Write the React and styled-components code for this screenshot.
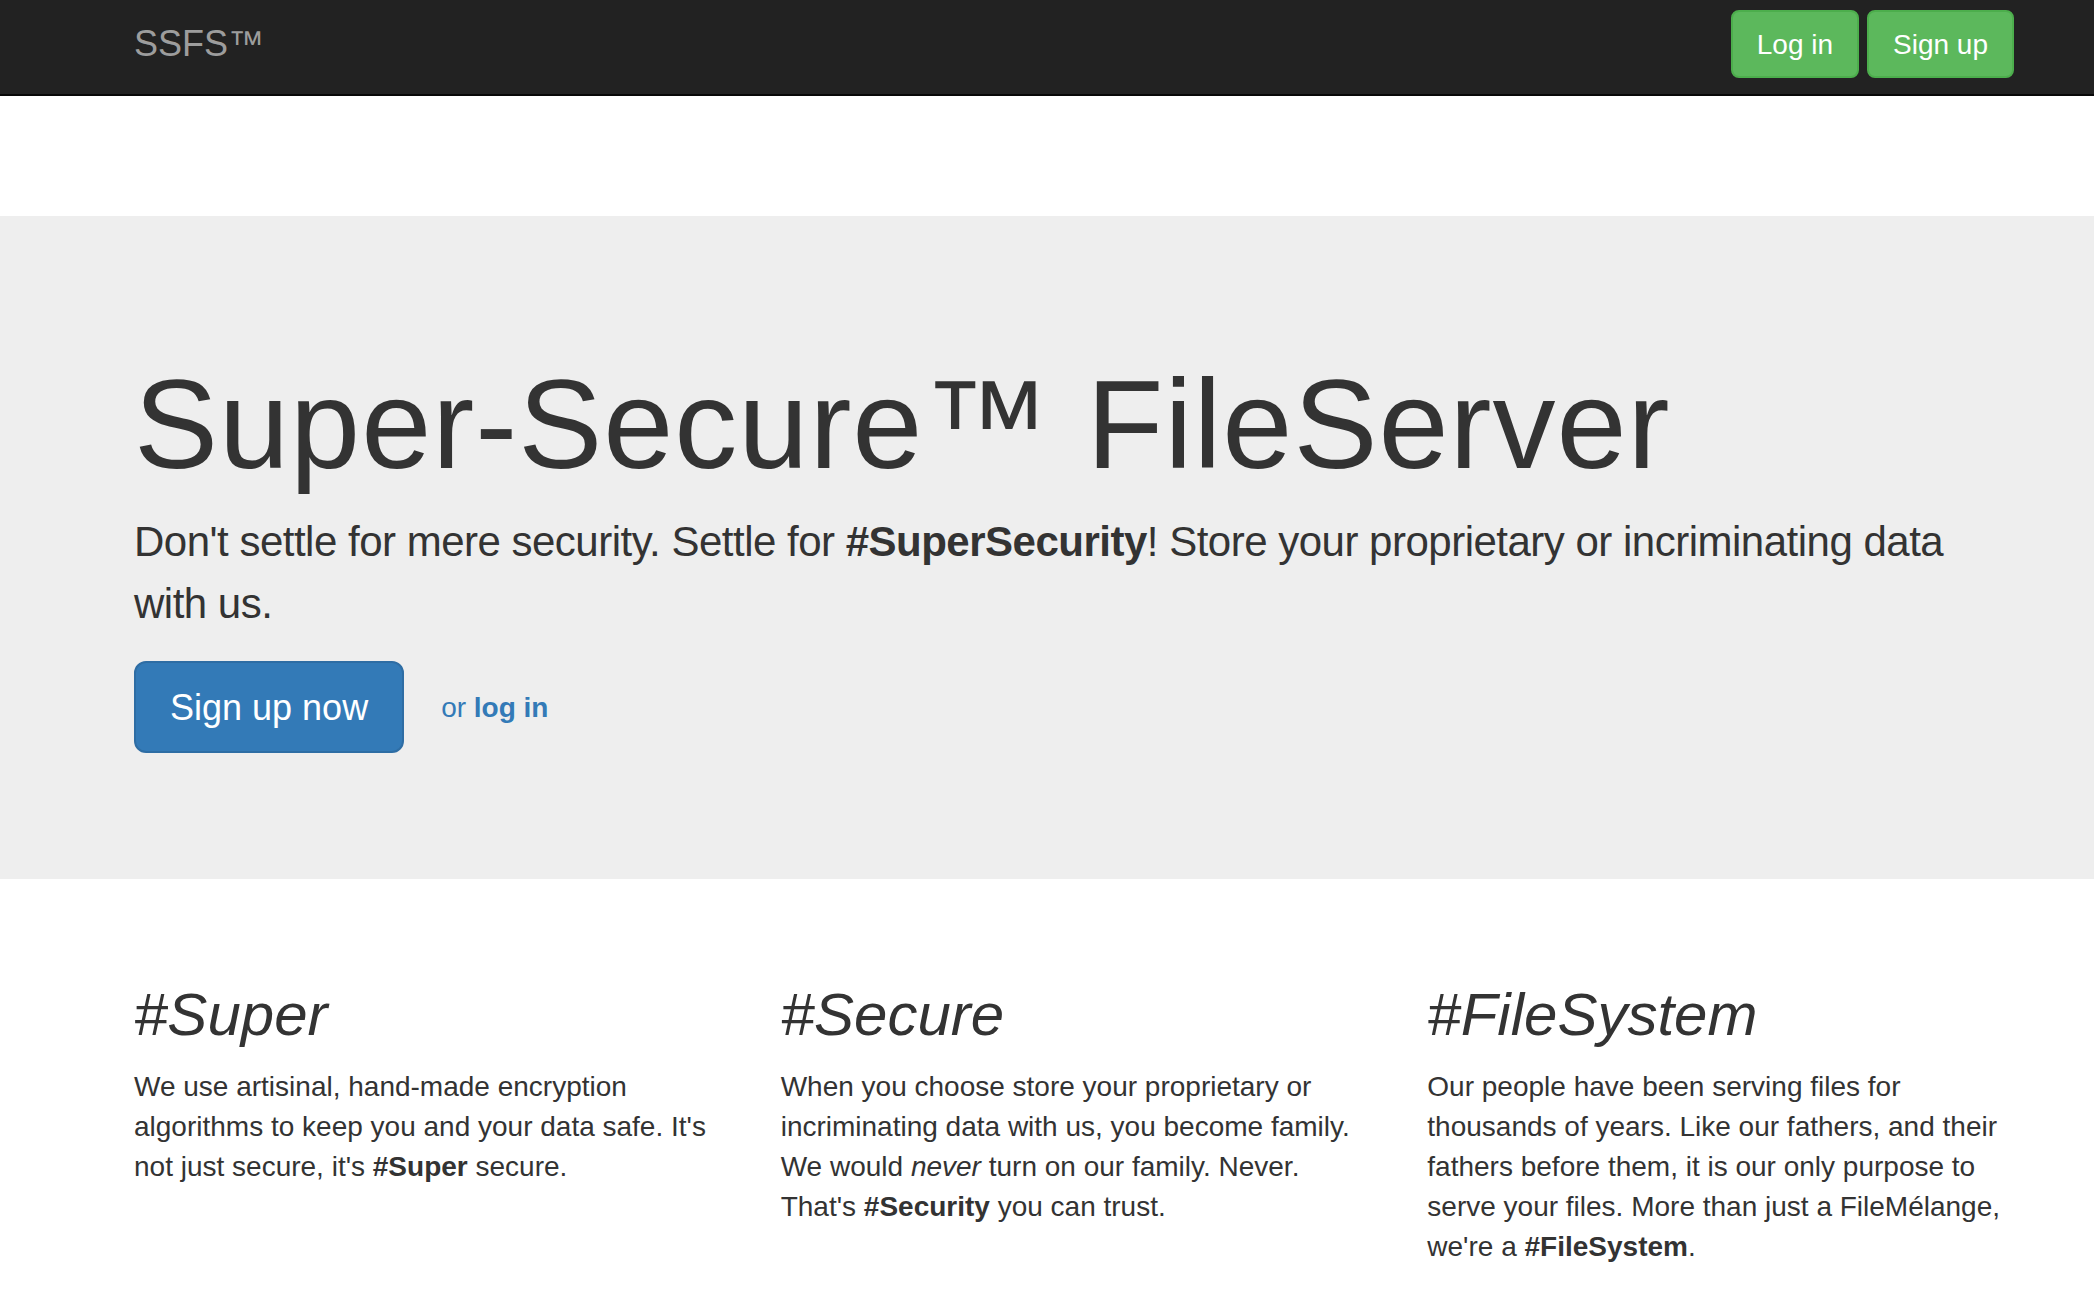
import styled, { createGlobalStyle } from "styled-components";

const GlobalStyle = createGlobalStyle`
    * {
        box-sizing: border-box;
    }

    body {
        margin: 0;
        background: #fff;
        color: #333;
        font-family: "Liberation Sans", Helvetica, Arial, sans-serif;
        font-size: 28px;
        line-height: 40px;
    }

    strong {
        font-weight: 700;
    }
`;

const Navbar = styled.nav`
    height: 96px;
    background-color: #222;
    border-bottom: 2px solid #080808;
`;

const Container = styled.div`
    width: 1940px;
    margin-left: 104px;
    padding: 0 30px;
`;

const NavInner = styled(Container)`
    display: flex;
    justify-content: space-between;
    align-items: flex-start;
`;

const Brand = styled.a`
    margin-top: 24px;
    font-size: 36px;
    line-height: 40px;
    color: #9d9d9d;
    text-decoration: none;
`;

const NavButtons = styled.div`
    display: flex;
    gap: 8px;
    margin-top: 10px;
`;

const NavButton = styled.a`
    display: inline-block;
    padding: 13px 24px 11px;
    font-size: 28px;
    line-height: 40px;
    color: #fff;
    background-color: #5cb85c;
    border: 2px solid #4cae4c;
    border-radius: 8px;
    text-decoration: none;
`;

const Jumbotron = styled.section`
    margin: 120px 0 60px;
    padding: 96px 0;
    background-color: #eee;
`;

const Title = styled.h1`
    margin: 44px 0 16px;
    font-size: 126px;
    line-height: 1.1;
    font-weight: 500;
    letter-spacing: 1px;
    color: #333;
`;

const Lead = styled.p`
    margin: 0 0 26px;
    font-size: 42px;
    line-height: 62px;
    font-weight: 300;
    letter-spacing: -0.5px;
`;

const Actions = styled.p`
    display: flex;
    align-items: center;
    margin: 0 0 30px;
`;

const BigButton = styled.a`
    display: inline-block;
    padding: 21px 34px 19px;
    font-size: 36px;
    line-height: 48px;
    color: #fff;
    background-color: #337ab7;
    border: 2px solid #2e6da4;
    border-radius: 12px;
    text-decoration: none;
`;

const AltLink = styled.span`
    margin-left: 37px;
    padding-top: 2px;
    line-height: 40px;
    color: #337ab7;

    a {
        color: #337ab7;
        font-weight: bold;
        text-decoration: none;
    }
`;

const Row = styled.div`
    display: grid;
    grid-template-columns: repeat(3, 1fr);
    margin: 0 -30px;
`;

const Feature = styled.div`
    padding: 0 30px;
`;

const FeatureTitle = styled.h2`
    margin: 43px 0 19px;
    font-size: 60px;
    line-height: 66px;
    font-weight: 500;
    font-style: italic;
    color: #333;
`;

const FeatureText = styled.p`
    margin: 0 0 20px;
`;

const App = () => {
    return (
        <>
            <GlobalStyle />
            <Navbar>
                <NavInner>
                    <Brand href="#">SSFS™</Brand>
                    <NavButtons>
                        <NavButton href="#">Log in</NavButton>
                        <NavButton href="#">Sign up</NavButton>
                    </NavButtons>
                </NavInner>
            </Navbar>

            <Jumbotron>
                <Container>
                    <Title>Super-Secure™ FileServer</Title>
                    <Lead>
                        Don't settle for mere security. Settle for <strong>#SuperSecurity</strong>! Store your
                        proprietary or incriminating data with us.
                    </Lead>
                    <Actions>
                        <BigButton href="#">Sign up now</BigButton>
                        <AltLink>
                            or <a href="#">log in</a>
                        </AltLink>
                    </Actions>
                </Container>
            </Jumbotron>

            <Container>
                <Row>
                    <Feature>
                        <FeatureTitle>#Super</FeatureTitle>
                        <FeatureText>
                            We use artisinal, hand-made encryption algorithms to keep you and your data safe.
                            It's not just secure, it's <strong>#Super</strong> secure.
                        </FeatureText>
                    </Feature>
                    <Feature>
                        <FeatureTitle>#Secure</FeatureTitle>
                        <FeatureText>
                            When you choose store your proprietary or incriminating data with us, you become
                            family. We would <em>never</em> turn on our family. Never. That's{" "}
                            <strong>#Security</strong> you can trust.
                        </FeatureText>
                    </Feature>
                    <Feature>
                        <FeatureTitle>#FileSystem</FeatureTitle>
                        <FeatureText>
                            Our people have been serving files for thousands of years. Like our fathers, and
                            their fathers before them, it is our only purpose to serve your files. More than
                            just a FileMélange, we're a <strong>#FileSystem</strong>.
                        </FeatureText>
                    </Feature>
                </Row>
            </Container>
        </>
    );
};

export default App;
